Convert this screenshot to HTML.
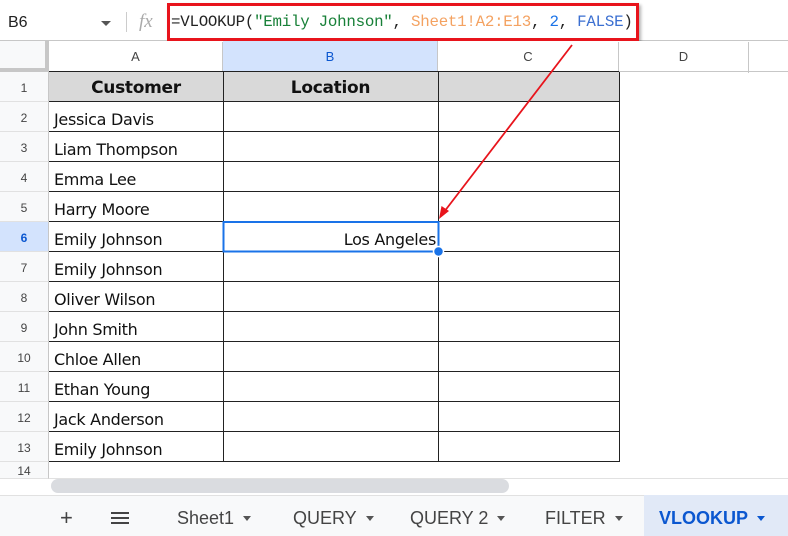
<!DOCTYPE html><html><head><style>
*{margin:0;padding:0;box-sizing:border-box}
body{width:788px;height:536px;overflow:hidden;background:#fff;font-family:"Liberation Sans",sans-serif;position:relative}
.a{position:absolute}
.rh{position:absolute;left:0;width:49px;text-align:center;font-size:12px;color:#444;background:#f8f9fa;border-bottom:1px solid #e1e1e1;border-right:1px solid #c7c7c7}
.cell{position:absolute;font-size:16px;color:#111;line-height:30px;padding-left:5px;font-family:"DejaVu Sans","Liberation Sans",sans-serif;letter-spacing:-0.3px}
.mono{font-family:"Liberation Mono",monospace}
.tab{position:absolute;top:508px;font-size:18px;color:#444;font-family:"Liberation Sans Narrow","Liberation Sans",sans-serif}
.tri{display:inline-block;width:0;height:0;border-left:4px solid transparent;border-right:4px solid transparent;border-top:5px solid #555;margin-left:9px;vertical-align:3px}
</style></head><body>
<div class="a" style="left:0;top:0;width:788px;height:41px;background:#fff;border-bottom:1px solid #c7c7c7"></div>
<div class="a" style="left:8px;top:14px;font-size:16px;color:#222">B6</div>
<div class="a" style="left:101px;top:21px;border-left:5px solid transparent;border-right:5px solid transparent;border-top:5px solid #555"></div>
<div class="a" style="left:126px;top:12px;width:1px;height:20px;background:#ccc"></div>
<div class="a" style="left:139px;top:11px;font-size:19px;color:#aaa;font-style:italic;font-family:'Liberation Serif',serif">fx</div>
<div class="a" style="left:167px;top:3px;width:472px;height:38px;border:3px solid #e8141c;box-shadow:2px 2px 3px rgba(0,0,0,.3);background:#fff"></div>
<div class="a mono" style="left:171px;top:13px;font-size:15.8px;color:#222;white-space:nowrap;letter-spacing:-0.25px">=VLOOKUP(<span style="color:#188038">"Emily Johnson"</span>, <span style="color:#f4a261">Sheet1!A2:E13</span>, <span style="color:#1a73e8">2</span>, <span style="color:#3b6fd1">FALSE</span>)</div>
<div class="a" style="left:0;top:41px;width:788px;height:31px;background:#fff;border-bottom:1px solid #c7c7c7"></div>
<div class="a" style="left:0;top:41px;width:49px;height:31px;background:#f8f9fa;border-right:4px solid #c7c7c7;border-bottom:4px solid #c7c7c7"></div>
<div class="a" style="left:49px;top:42px;width:174px;height:31px;border-right:1px solid #c7c7c7;text-align:center;line-height:30px;font-size:13px;color:#444">A</div>
<div class="a" style="left:223px;top:41px;width:215px;height:31px;background:#d3e3fd;border-right:1px solid #c7c7c7;text-align:center;line-height:31px;font-size:13px;color:#0b57d0">B</div>
<div class="a" style="left:438px;top:42px;width:181px;height:31px;border-right:1px solid #c7c7c7;text-align:center;line-height:30px;font-size:13px;color:#444">C</div>
<div class="a" style="left:619px;top:42px;width:130px;height:31px;border-right:1px solid #c7c7c7;text-align:center;line-height:30px;font-size:13px;color:#444">D</div>
<div class="a" style="left:49px;top:72px;width:570px;height:30px;background:#d9d9d9"></div>
<div class="rh" style="top:72px;height:30px;line-height:32px">1</div>
<div class="rh" style="top:102px;height:30px;line-height:32px">2</div>
<div class="rh" style="top:132px;height:30px;line-height:32px">3</div>
<div class="rh" style="top:162px;height:30px;line-height:32px">4</div>
<div class="rh" style="top:192px;height:30px;line-height:32px">5</div>
<div class="rh" style="top:222px;height:30px;line-height:32px;background:#d3e3fd;color:#0b57d0;font-weight:bold">6</div>
<div class="rh" style="top:252px;height:30px;line-height:32px">7</div>
<div class="rh" style="top:282px;height:30px;line-height:32px">8</div>
<div class="rh" style="top:312px;height:30px;line-height:32px">9</div>
<div class="rh" style="top:342px;height:30px;line-height:32px">10</div>
<div class="rh" style="top:372px;height:30px;line-height:32px">11</div>
<div class="rh" style="top:402px;height:30px;line-height:32px">12</div>
<div class="rh" style="top:432px;height:30px;line-height:32px">13</div>
<div class="rh" style="top:462px;height:17px;line-height:18px">14</div>
<div class="a" style="left:49px;top:478px;width:739px;height:1px;background:#e1e1e1"></div>
<svg class="a" style="left:0;top:0" width="788" height="536">
<g stroke="#222" stroke-width="1">
<line x1="49" y1="71.5" x2="619" y2="71.5"/>
<line x1="49" y1="101.5" x2="619" y2="101.5"/>
<line x1="49" y1="131.5" x2="619" y2="131.5"/>
<line x1="49" y1="161.5" x2="619" y2="161.5"/>
<line x1="49" y1="191.5" x2="619" y2="191.5"/>
<line x1="49" y1="221.5" x2="619" y2="221.5"/>
<line x1="49" y1="251.5" x2="619" y2="251.5"/>
<line x1="49" y1="281.5" x2="619" y2="281.5"/>
<line x1="49" y1="311.5" x2="619" y2="311.5"/>
<line x1="49" y1="341.5" x2="619" y2="341.5"/>
<line x1="49" y1="371.5" x2="619" y2="371.5"/>
<line x1="49" y1="401.5" x2="619" y2="401.5"/>
<line x1="49" y1="431.5" x2="619" y2="431.5"/>
<line x1="49" y1="461.5" x2="619" y2="461.5"/>
<line x1="223.5" y1="72" x2="223.5" y2="462"/>
<line x1="438.5" y1="72" x2="438.5" y2="462"/>
<line x1="619.5" y1="72" x2="619.5" y2="462"/>
</g>
<rect x="223.5" y="222" width="215" height="29.5" fill="none" stroke="#1a73e8" stroke-width="2"/>
<circle cx="438.5" cy="251.5" r="5" fill="#1a73e8" stroke="#fff" stroke-width="1.5"/>
<line x1="572" y1="45" x2="444" y2="212" stroke="#e8141c" stroke-width="1.8"/>
<polygon points="439,219 441.5,206 449,211" fill="#e8141c"/>
</svg>
<div class="cell" style="left:49px;top:73px;width:174px;text-align:center;padding:0;font-weight:bold;font-size:17px">Customer</div>
<div class="cell" style="left:223px;top:73px;width:215px;text-align:center;padding:0;font-weight:bold;font-size:17px">Location</div>
<div class="cell" style="left:49px;top:105px">Jessica Davis</div>
<div class="cell" style="left:49px;top:135px">Liam Thompson</div>
<div class="cell" style="left:49px;top:165px">Emma Lee</div>
<div class="cell" style="left:49px;top:195px">Harry Moore</div>
<div class="cell" style="left:49px;top:225px">Emily Johnson</div>
<div class="cell" style="left:223px;top:225px;width:213px;text-align:right;padding:0">Los Angeles</div>
<div class="cell" style="left:49px;top:255px">Emily Johnson</div>
<div class="cell" style="left:49px;top:285px">Oliver Wilson</div>
<div class="cell" style="left:49px;top:315px">John Smith</div>
<div class="cell" style="left:49px;top:345px">Chloe Allen</div>
<div class="cell" style="left:49px;top:375px">Ethan Young</div>
<div class="cell" style="left:49px;top:405px">Jack Anderson</div>
<div class="cell" style="left:49px;top:435px">Emily Johnson</div>
<div class="a" style="left:51px;top:479px;width:458px;height:14px;border-radius:7px;background:#dadce0"></div>
<div class="a" style="left:0;top:495px;width:788px;height:41px;background:#f8f9fa;border-top:1px solid #e1e1e1"></div>
<div class="a" style="left:644px;top:495px;width:144px;height:41px;background:#e1e9f7"></div>
<div class="a" style="left:60px;top:505px;font-size:22px;color:#444">+</div>
<div class="a" style="left:111px;top:512px;width:18px;height:2px;background:#444;box-shadow:0 5px 0 #444,0 10px 0 #444"></div>
<div class="tab" style="left:177px">Sheet1<span class="tri"></span></div>
<div class="tab" style="left:293px">QUERY<span class="tri"></span></div>
<div class="tab" style="left:410px">QUERY 2<span class="tri"></span></div>
<div class="tab" style="left:545px">FILTER<span class="tri"></span></div>
<div class="tab" style="left:659px;color:#0b57d0;font-weight:bold">VLOOKUP<span class="tri" style="border-top-color:#0b57d0"></span></div>
</body></html>
